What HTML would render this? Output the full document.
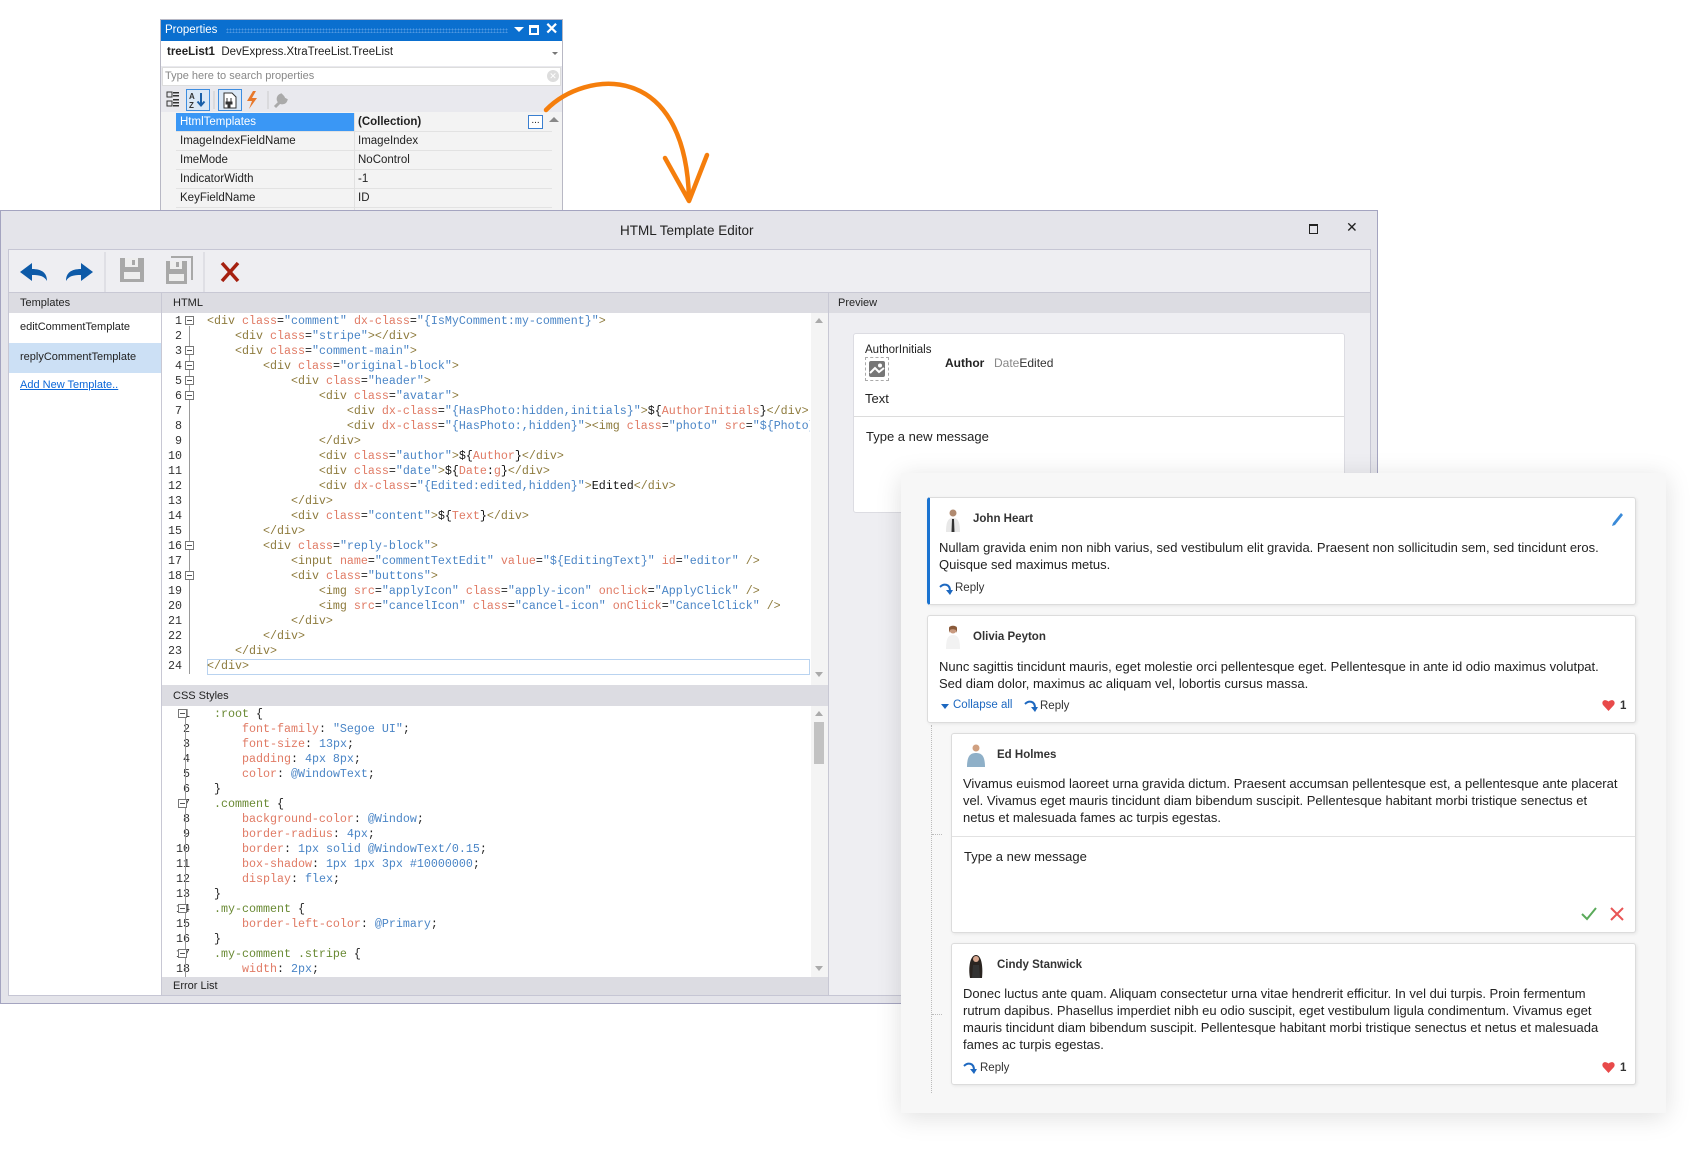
<!DOCTYPE html>
<html><head><meta charset="utf-8">
<style>
*{box-sizing:border-box;margin:0;padding:0}
body{width:1700px;height:1168px;background:#fff;position:relative;overflow:hidden;font-family:"Liberation Sans",sans-serif;color:#222}
.a{position:absolute}
.ui{font-size:12px;white-space:nowrap}
.mono{font-family:"Liberation Mono",monospace;font-size:11.67px;white-space:pre;line-height:15px}
.t{color:#8d7a3c}.at{color:#e07a64}.v{color:#4a85c6}.k{color:#111}
.sel{color:#6a8a34}
.ln{font-family:"Liberation Mono",monospace;font-size:11.67px;line-height:15px;text-align:right;color:#333}
.fold{position:absolute;width:9px;height:9px;border:1px solid #777;background:#fff}
.fold:after{content:"";position:absolute;left:1px;top:3px;width:5px;height:1px;background:#555}
.card{position:absolute;background:#fff;border:1px solid #dcdcdc;border-radius:3px;box-shadow:1px 1px 3px rgba(0,0,0,.08)}
.ct{font-size:13px;line-height:17px;white-space:nowrap;color:#222}
.nm{font-size:11.5px;font-weight:bold;color:#333;white-space:nowrap}
.rp{font-size:11.5px;color:#333;white-space:nowrap}
.prow{position:absolute;left:176px;width:376px;height:19px;border-bottom:1px solid #e2e2e2;font-size:11.5px;line-height:18px}
.prow span{position:absolute}
</style></head><body>

<!-- Properties panel -->
<div class="a" style="left:160px;top:19px;width:403px;height:195px;background:#e9e9ee;border:1px solid #b8b8c4"></div>
<div class="a" style="left:161px;top:20px;width:401px;height:21px;background:#0a6fcf"></div>
<div class="a ui" style="left:165px;top:24px;color:#fff;font-size:11.5px">Properties</div>
<div class="a" style="left:226px;top:28px;width:282px;height:5px;background-image:radial-gradient(#4f97e0 0.8px,transparent 1px);background-size:3px 3px"></div>
<div class="a" style="left:514px;top:27px;width:0;height:0;border-left:5px solid transparent;border-right:5px solid transparent;border-top:5px solid #fff"></div>
<div class="a" style="left:529px;top:25px;width:10px;height:10px;border:2px solid #fff;border-top-width:3px"></div>
<div class="a" style="left:545px;top:19px;color:#fff;font-size:16px;font-weight:bold">✕</div>
<div class="a" style="left:161px;top:41px;width:401px;height:25px;background:#fff"></div>
<div class="a ui" style="left:167px;top:46px;font-size:11.5px"><b>treeList1</b>&nbsp; DevExpress.XtraTreeList.TreeList</div>
<div class="a" style="left:552px;top:52px;border-left:3px solid transparent;border-right:3px solid transparent;border-top:3px solid #777"></div>
<div class="a" style="left:162px;top:67px;width:399px;height:19px;background:#fff;border:1px solid #ddd"></div>
<div class="a ui" style="left:165px;top:70px;color:#888;font-size:11px">Type here to search properties</div>
<div class="a" style="left:547px;top:70px;width:12px;height:12px;border-radius:50%;background:#ddd;color:#fff;font-size:9px;text-align:center;line-height:12px">✕</div>
<svg class="a" style="left:165px;top:89px" width="150" height="22" viewBox="0 0 150 22">
<g fill="#333"><rect x="2" y="3" width="5" height="5" fill="none" stroke="#333"/><rect x="8" y="3" width="6" height="1.5"/><rect x="8" y="6" width="6" height="1.5"/><rect x="8" y="10" width="6" height="1.5"/><rect x="2" y="12" width="5" height="5" fill="none" stroke="#333"/><rect x="8" y="13" width="6" height="1.5"/><rect x="8" y="16" width="6" height="1.5"/></g>
<rect x="21.5" y="0.5" width="23" height="21" fill="#dbe8f6" stroke="#3d8de0"/>
<text x="24" y="10" font-size="8" font-family="Liberation Sans" font-weight="bold" fill="#333">A</text><text x="24" y="19" font-size="8" font-family="Liberation Sans" font-weight="bold" fill="#333">Z</text>
<path d="M36 4v12M32.5 12.5L36 16.5 39.5 12.5" stroke="#1a5fa8" stroke-width="2" fill="none"/>
<line x1="49" y1="2" x2="49" y2="20" stroke="#ccc"/>
<rect x="53.5" y="0.5" width="23" height="21" fill="#dbe8f6" stroke="#3d8de0"/>
<path d="M59 4h8l4 4v11h-12z" fill="#fff" stroke="#333"/><path d="M62 9v4M66 9v4M61 13h6v2h-2v3h-2v-3h-2z" stroke="#333" fill="#333" stroke-width="1"/>
<path d="M88 2l-6 10h5l-3 8 8-11h-5l4-7z" fill="#e8782a"/>
<line x1="103" y1="2" x2="103" y2="20" stroke="#ccc"/>
<path d="M110 18l7-7M116 6a4 4 0 1 0 5 5l-2-1-1-2z" stroke="#aaa" stroke-width="3" fill="#aaa"/>
</svg>
<div class="a" style="left:161px;top:112px;width:401px;height:102px;background:#f3f3f3"></div>
<div class="prow" style="top:113px"><span style="left:0;width:178px;height:18px;background:#3a97f5"></span><span style="left:4px;color:#fff">HtmlTemplates</span><span style="left:182px;font-weight:bold">(Collection)</span></div>
<div class="a" style="left:528px;top:115px;width:15px;height:14px;border:1px solid #3a7fd0;background:#fff;font-size:10px;line-height:9px;text-align:center">...</div>
<div class="a" style="left:549px;top:117px;border-left:5px solid transparent;border-right:5px solid transparent;border-bottom:5px solid #888"></div>
<div class="prow" style="top:132px"><span style="left:4px">ImageIndexFieldName</span><span style="left:182px">ImageIndex</span></div>
<div class="prow" style="top:151px"><span style="left:4px">ImeMode</span><span style="left:182px">NoControl</span></div>
<div class="prow" style="top:170px"><span style="left:4px">IndicatorWidth</span><span style="left:182px">-1</span></div>
<div class="prow" style="top:189px"><span style="left:4px">KeyFieldName</span><span style="left:182px">ID</span></div>
<div class="a" style="left:354px;top:113px;width:1px;height:100px;background:#e0e0e0"></div>

<svg class="a" style="left:0;top:0" width="800" height="220">
<path d="M546 110 C 585 70, 685 60, 689 198" stroke="#f57e0c" stroke-width="4.5" fill="none" stroke-linecap="round"/>
<path d="M665 158 L689 201 L707 155" stroke="#f57e0c" stroke-width="4.5" fill="none" stroke-linecap="round" stroke-linejoin="round"/>
</svg>

<!-- Editor window -->
<div class="a" style="left:0;top:210px;width:1378px;height:794px;background:#e4e4ea;border:1px solid #a4a4c0"></div>
<div class="a ui" style="left:620px;top:223px;font-size:13.5px;color:#222">HTML Template Editor</div>
<div class="a" style="left:1309px;top:224px;width:9px;height:10px;border:1.5px solid #222;border-top-width:2px"></div>
<div class="a" style="left:1346px;top:219px;font-size:14px;color:#222">✕</div>
<div class="a" style="left:8px;top:249px;width:1363px;height:747px;background:#eeeef2;border:1px solid #c6c6d4"></div>
<svg class="a" style="left:9px;top:250px" width="260" height="42">
<path d="M11 22 L23 13 L23 19 C33 19 38 23 38 31 C35 26 31 25 23 25 L23 31 Z" fill="#0d5aa8"/>
<path d="M84 22 L72 13 L72 19 C62 19 57 23 57 31 C60 26 64 25 72 25 L72 31 Z" fill="#0d5aa8"/>
<line x1="96" y1="2" x2="96" y2="42" stroke="#d0d0d8"/>
<path d="M111 8h24v24h-24z" fill="#a8a8a8"/><rect x="116" y="8" width="13" height="9" fill="#eee"/><rect x="123" y="10" width="3" height="5" fill="#a8a8a8"/><rect x="115" y="22" width="16" height="7" fill="#eee"/>
<path d="M157 11h21v23h-21z" fill="#a8a8a8"/><path d="M162 7h21v23" fill="none" stroke="#a8a8a8" stroke-width="2"/><rect x="161" y="11" width="12" height="8" fill="#eee"/><rect x="167" y="12" width="3" height="5" fill="#a8a8a8"/><rect x="160" y="24" width="15" height="7" fill="#eee"/>
<line x1="195" y1="2" x2="195" y2="42" stroke="#d0d0d8"/>
<path d="M213 13 L229 31 M229 13 L213 31" stroke="#a52010" stroke-width="3.5"/>
</svg>
<div class="a" style="left:9px;top:292px;width:1361px;height:21px;background:#dcdce2;border-top:1px solid #c8c8d4"></div>
<div class="a" style="left:161px;top:292px;width:1px;height:703px;background:#c8c8d4"></div>
<div class="a" style="left:828px;top:292px;width:1px;height:703px;background:#c8c8d4"></div>
<div class="a ui" style="left:20px;top:297px;font-size:11px">Templates</div>
<div class="a ui" style="left:173px;top:297px;font-size:11px">HTML</div>
<div class="a ui" style="left:838px;top:297px;font-size:11px">Preview</div>
<div class="a" style="left:9px;top:313px;width:152px;height:682px;background:#fff"></div>
<div class="a ui" style="left:20px;top:321px;font-size:11px">editCommentTemplate</div>
<div class="a" style="left:9px;top:343px;width:152px;height:30px;background:#cce0f5"></div>
<div class="a ui" style="left:20px;top:351px;font-size:11px">replyCommentTemplate</div>
<div class="a ui" style="left:20px;top:379px;color:#0a66d8;text-decoration:underline;font-size:11px">Add New Template..</div>
<div class="a" style="left:162px;top:313px;width:666px;height:372px;background:#fff"></div>
<div class="a" style="left:811px;top:313px;width:17px;height:372px;background:#f4f4f4"></div>
<div class="a" style="left:815px;top:318px;border-left:4px solid transparent;border-right:4px solid transparent;border-bottom:5px solid #aaa"></div>
<div class="a" style="left:815px;top:672px;border-left:4px solid transparent;border-right:4px solid transparent;border-top:5px solid #aaa"></div>
<div class="a" style="left:207px;top:659px;width:603px;height:16px;border:1px solid #b9d3f0"></div>
<div class="a ln" style="left:162px;top:314px;width:20px">1<br>2<br>3<br>4<br>5<br>6<br>7<br>8<br>9<br>10<br>11<br>12<br>13<br>14<br>15<br>16<br>17<br>18<br>19<br>20<br>21<br>22<br>23<br>24</div>
<div class="a" style="left:189px;top:326px;width:1px;height:348px;background:#999"></div>
<div class="fold" style="left:185px;top:316px"></div><div class="fold" style="left:185px;top:346px"></div><div class="fold" style="left:185px;top:361px"></div><div class="fold" style="left:185px;top:376px"></div><div class="fold" style="left:185px;top:391px"></div><div class="fold" style="left:185px;top:541px"></div><div class="fold" style="left:185px;top:571px"></div>
<div class="a mono" style="left:207px;top:314px;width:603px;height:362px;overflow:hidden"><span class="t">&lt;div</span> <span class="at">class</span>=<span class="v">"comment"</span> <span class="at">dx-class</span>=<span class="v">"{IsMyComment:my-comment}"</span><span class="t">&gt;</span>
    <span class="t">&lt;div</span> <span class="at">class</span>=<span class="v">"stripe"</span><span class="t">&gt;&lt;/div&gt;</span>
    <span class="t">&lt;div</span> <span class="at">class</span>=<span class="v">"comment-main"</span><span class="t">&gt;</span>
        <span class="t">&lt;div</span> <span class="at">class</span>=<span class="v">"original-block"</span><span class="t">&gt;</span>
            <span class="t">&lt;div</span> <span class="at">class</span>=<span class="v">"header"</span><span class="t">&gt;</span>
                <span class="t">&lt;div</span> <span class="at">class</span>=<span class="v">"avatar"</span><span class="t">&gt;</span>
                    <span class="t">&lt;div</span> <span class="at">dx-class</span>=<span class="v">"{HasPhoto:hidden,initials}"</span><span class="t">&gt;</span><span class="k">${</span><span class="at">AuthorInitials</span><span class="k">}</span><span class="t">&lt;/div&gt;</span>
                    <span class="t">&lt;div</span> <span class="at">dx-class</span>=<span class="v">"{HasPhoto:,hidden}"</span><span class="t">&gt;&lt;img</span> <span class="at">class</span>=<span class="v">"photo"</span> <span class="at">src</span>=<span class="v">"${Photo}"</span><span class="t">/&gt;</span>
                <span class="t">&lt;/div&gt;</span>
                <span class="t">&lt;div</span> <span class="at">class</span>=<span class="v">"author"</span><span class="t">&gt;</span><span class="k">${</span><span class="at">Author</span><span class="k">}</span><span class="t">&lt;/div&gt;</span>
                <span class="t">&lt;div</span> <span class="at">class</span>=<span class="v">"date"</span><span class="t">&gt;</span><span class="k">${</span><span class="at">Date</span><span class="k">:</span><span class="at">g</span><span class="k">}</span><span class="t">&lt;/div&gt;</span>
                <span class="t">&lt;div</span> <span class="at">dx-class</span>=<span class="v">"{Edited:edited,hidden}"</span><span class="t">&gt;</span><span class="k">Edited</span><span class="t">&lt;/div&gt;</span>
            <span class="t">&lt;/div&gt;</span>
            <span class="t">&lt;div</span> <span class="at">class</span>=<span class="v">"content"</span><span class="t">&gt;</span><span class="k">${</span><span class="at">Text</span><span class="k">}</span><span class="t">&lt;/div&gt;</span>
        <span class="t">&lt;/div&gt;</span>
        <span class="t">&lt;div</span> <span class="at">class</span>=<span class="v">"reply-block"</span><span class="t">&gt;</span>
            <span class="t">&lt;input</span> <span class="at">name</span>=<span class="v">"commentTextEdit"</span> <span class="at">value</span>=<span class="v">"${EditingText}"</span> <span class="at">id</span>=<span class="v">"editor"</span> <span class="t">/&gt;</span>
            <span class="t">&lt;div</span> <span class="at">class</span>=<span class="v">"buttons"</span><span class="t">&gt;</span>
                <span class="t">&lt;img</span> <span class="at">src</span>=<span class="v">"applyIcon"</span> <span class="at">class</span>=<span class="v">"apply-icon"</span> <span class="at">onclick</span>=<span class="v">"ApplyClick"</span> <span class="t">/&gt;</span>
                <span class="t">&lt;img</span> <span class="at">src</span>=<span class="v">"cancelIcon"</span> <span class="at">class</span>=<span class="v">"cancel-icon"</span> <span class="at">onClick</span>=<span class="v">"CancelClick"</span> <span class="t">/&gt;</span>
            <span class="t">&lt;/div&gt;</span>
        <span class="t">&lt;/div&gt;</span>
    <span class="t">&lt;/div&gt;</span>
<span class="t">&lt;/div&gt;</span></div>
<div class="a" style="left:162px;top:685px;width:666px;height:21px;background:#dcdce2"></div>
<div class="a ui" style="left:173px;top:690px;font-size:11px">CSS Styles</div>
<div class="a" style="left:162px;top:706px;width:666px;height:271px;background:#fff"></div>
<div class="a" style="left:811px;top:706px;width:17px;height:271px;background:#f4f4f4"></div>
<div class="a" style="left:814px;top:722px;width:10px;height:42px;background:#c2c2c2"></div>
<div class="a" style="left:815px;top:711px;border-left:4px solid transparent;border-right:4px solid transparent;border-bottom:5px solid #aaa"></div>
<div class="a" style="left:815px;top:966px;border-left:4px solid transparent;border-right:4px solid transparent;border-top:5px solid #aaa"></div>
<div class="a ln" style="left:162px;top:707px;width:28px">1<br>2<br>3<br>4<br>5<br>6<br>7<br>8<br>9<br>10<br>11<br>12<br>13<br>14<br>15<br>16<br>17<br>18</div>
<div class="a" style="left:185px;top:712px;width:1px;height:265px;background:#999"></div>
<div class="fold" style="left:178px;top:709px"></div><div class="fold" style="left:178px;top:799px"></div><div class="fold" style="left:178px;top:904px"></div><div class="fold" style="left:178px;top:949px"></div>
<div class="a mono" style="left:214px;top:707px;width:596px;height:270px;overflow:hidden"><span class="sel">:root</span> {
    <span class="at">font-family</span>: <span class="v">"Segoe UI"</span>;
    <span class="at">font-size</span>: <span class="v">13px</span>;
    <span class="at">padding</span>: <span class="v">4px 8px</span>;
    <span class="at">color</span>: <span class="v">@WindowText</span>;
}
<span class="sel">.comment</span> {
    <span class="at">background-color</span>: <span class="v">@Window</span>;
    <span class="at">border-radius</span>: <span class="v">4px</span>;
    <span class="at">border</span>: <span class="v">1px solid @WindowText/0.15</span>;
    <span class="at">box-shadow</span>: <span class="v">1px 1px 3px #10000000</span>;
    <span class="at">display</span>: <span class="v">flex</span>;
}
<span class="sel">.my-comment</span> {
    <span class="at">border-left-color</span>: <span class="v">@Primary</span>;
}
<span class="sel">.my-comment .stripe</span> {
    <span class="at">width</span>: <span class="v">2px</span>;</div>
<div class="a" style="left:162px;top:977px;width:666px;height:18px;background:#dcdce2"></div>
<div class="a ui" style="left:173px;top:980px;font-size:11px">Error List</div>

<div class="a" style="left:829px;top:313px;width:541px;height:682px;background:#eeeef2"></div>
<div class="a" style="left:853px;top:333px;width:492px;height:180px;background:#fff;border:1px solid #dcdce2;border-radius:3px"></div>
<div class="a ui" style="left:865px;top:344px;font-size:11.5px">AuthorInitials</div>
<div class="a" style="left:865px;top:357px;width:24px;height:24px;border:1.5px dashed #aaa"></div>
<svg class="a" style="left:869px;top:361px" width="16" height="16"><rect width="16" height="16" rx="2" fill="#777"/><circle cx="11" cy="4.5" r="2" fill="#fff"/><path d="M1 12 L6 7 L10 11 L15 7" stroke="#fff" stroke-width="2" fill="none"/></svg>
<div class="a ui" style="left:945px;top:356px;font-weight:bold;font-size:12px">Author</div>
<div class="a ui" style="left:994px;top:356px;font-size:12px;color:#888">Date<span style="color:#333">Edited</span></div>
<div class="a ui" style="left:865px;top:391px;font-size:13px">Text</div>
<div class="a" style="left:854px;top:416px;width:490px;height:1px;background:#dcdcdc"></div>
<div class="a ui" style="left:866px;top:429px;font-size:13px">Type a new message</div>

<div class="a" style="left:901px;top:473px;width:765px;height:640px;background:#f7f7f7;box-shadow:0 4px 24px rgba(0,0,0,.13)"></div>

<div class="card" style="left:927px;top:497px;width:709px;height:108px;border-left:3px solid #1a73d0"></div>
<svg class="a" style="left:943px;top:508px" width="20" height="25"><circle cx="10" cy="5" r="3.5" fill="#b08a70"/><path d="M3 24 C3 12 6 10 10 10 C14 10 17 12 17 24Z" fill="#e8e8e8"/><path d="M9 11h2l0.5 13h-3z" fill="#333"/></svg>
<div class="a nm" style="left:973px;top:513px">John Heart</div>
<svg class="a" style="left:1610px;top:510px" width="14" height="16"><path d="M3 13 L11 3 L13 5 L5 15 L2 16Z" fill="#3a8ad8"/></svg>
<div class="a ct" style="left:939px;top:539px">Nullam gravida enim non nibh varius, sed vestibulum elit gravida. Praesent non sollicitudin sem, sed tincidunt eros.<br>Quisque sed maximus metus.</div>
<svg class="a" style="left:939px;top:582px" width="14" height="14"><path d="M1 5 C5 1 11 2 11 9" stroke="#1d68c0" stroke-width="2" fill="none"/><path d="M7 8 L11 13 L14 8Z" fill="#1d68c0"/></svg>
<div class="a rp" style="left:955px;top:582px">Reply</div>

<div class="card" style="left:927px;top:615px;width:709px;height:108px"></div>
<svg class="a" style="left:943px;top:625px" width="20" height="25"><circle cx="10" cy="5" r="3.5" fill="#c89a80"/><path d="M6 3 C6 0 14 0 14 3 L14 8 L13 5 C11 4 8 4 7 5 L6 8Z" fill="#8a5a3a"/><path d="M3 24 C3 12 6 10 10 10 C14 10 17 12 17 24Z" fill="#f2f2f2"/></svg>
<div class="a nm" style="left:973px;top:631px">Olivia Peyton</div>
<div class="a ct" style="left:939px;top:658px">Nunc sagittis tincidunt mauris, eget molestie orci pellentesque eget. Pellentesque in ante id odio maximus volutpat.<br>Sed diam dolor, maximus ac aliquam vel, lobortis cursus massa.</div>
<div class="a" style="left:941px;top:704px;border-left:4px solid transparent;border-right:4px solid transparent;border-top:5px solid #1d68c0"></div>
<div class="a rp" style="left:953px;top:699px;color:#1d68c0">Collapse all</div>
<svg class="a" style="left:1024px;top:699px" width="14" height="14"><path d="M1 5 C5 1 11 2 11 9" stroke="#1d68c0" stroke-width="2" fill="none"/><path d="M7 8 L11 13 L14 8Z" fill="#1d68c0"/></svg>
<div class="a rp" style="left:1040px;top:700px">Reply</div>
<svg class="a" style="left:1602px;top:699px" width="13" height="13"><path d="M6.5 12 L1 6 C-1 3 2 -1 6.5 2.5 C11 -1 14 3 12 6Z" fill="#e84a4a"/></svg>
<div class="a rp" style="left:1620px;top:700px;font-weight:bold">1</div>

<div class="a" style="left:931px;top:725px;width:0;height:368px;border-left:1px dotted #bbb"></div>
<div class="a" style="left:932px;top:834px;width:10px;border-top:1px dotted #bbb"></div>
<div class="a" style="left:932px;top:1014px;width:10px;border-top:1px dotted #bbb"></div>

<div class="card" style="left:951px;top:733px;width:685px;height:200px"></div>
<div class="a" style="left:952px;top:836px;width:683px;height:1px;background:#e2e2e2"></div>
<svg class="a" style="left:965px;top:743px" width="22" height="25"><circle cx="11" cy="5" r="3.5" fill="#d0a080"/><path d="M2 24 C2 12 6 10 11 10 C16 10 20 12 20 24Z" fill="#8fb0c8"/></svg>
<div class="a nm" style="left:997px;top:749px">Ed Holmes</div>
<div class="a ct" style="left:963px;top:775px">Vivamus euismod laoreet urna gravida dictum. Praesent accumsan pellentesque est, a pellentesque ante placerat<br>vel. Vivamus eget mauris tincidunt diam bibendum suscipit. Pellentesque habitant morbi tristique senectus et<br>netus et malesuada fames ac turpis egestas.</div>
<div class="a ct" style="left:964px;top:848px">Type a new message</div>
<svg class="a" style="left:1581px;top:907px" width="16" height="14"><path d="M1 7 L6 12 L15 1" stroke="#5aaa5a" stroke-width="2" fill="none"/></svg>
<svg class="a" style="left:1610px;top:907px" width="14" height="14"><path d="M1 1 L13 13 M13 1 L1 13" stroke="#e85555" stroke-width="2"/></svg>

<div class="card" style="left:951px;top:943px;width:685px;height:142px"></div>
<svg class="a" style="left:965px;top:953px" width="22" height="26"><path d="M5 25 C3 15 5 2 11 2 C17 2 18 15 17 25Z" fill="#2a2420"/><circle cx="11" cy="6" r="3" fill="#d8a890"/><path d="M8 12h6l1 13h-8z" fill="#333"/></svg>
<div class="a nm" style="left:997px;top:959px">Cindy Stanwick</div>
<div class="a ct" style="left:963px;top:985px">Donec luctus ante quam. Aliquam consectetur urna vitae hendrerit efficitur. In vel dui turpis. Proin fermentum<br>rutrum dapibus. Phasellus imperdiet nibh eu odio suscipit, eget vestibulum ligula condimentum. Vivamus eget<br>mauris tincidunt diam bibendum suscipit. Pellentesque habitant morbi tristique senectus et netus et malesuada<br>fames ac turpis egestas.</div>
<svg class="a" style="left:963px;top:1061px" width="14" height="14"><path d="M1 5 C5 1 11 2 11 9" stroke="#1d68c0" stroke-width="2" fill="none"/><path d="M7 8 L11 13 L14 8Z" fill="#1d68c0"/></svg>
<div class="a rp" style="left:980px;top:1062px">Reply</div>
<svg class="a" style="left:1602px;top:1061px" width="13" height="13"><path d="M6.5 12 L1 6 C-1 3 2 -1 6.5 2.5 C11 -1 14 3 12 6Z" fill="#e84a4a"/></svg>
<div class="a rp" style="left:1620px;top:1062px;font-weight:bold">1</div>

</body></html>
